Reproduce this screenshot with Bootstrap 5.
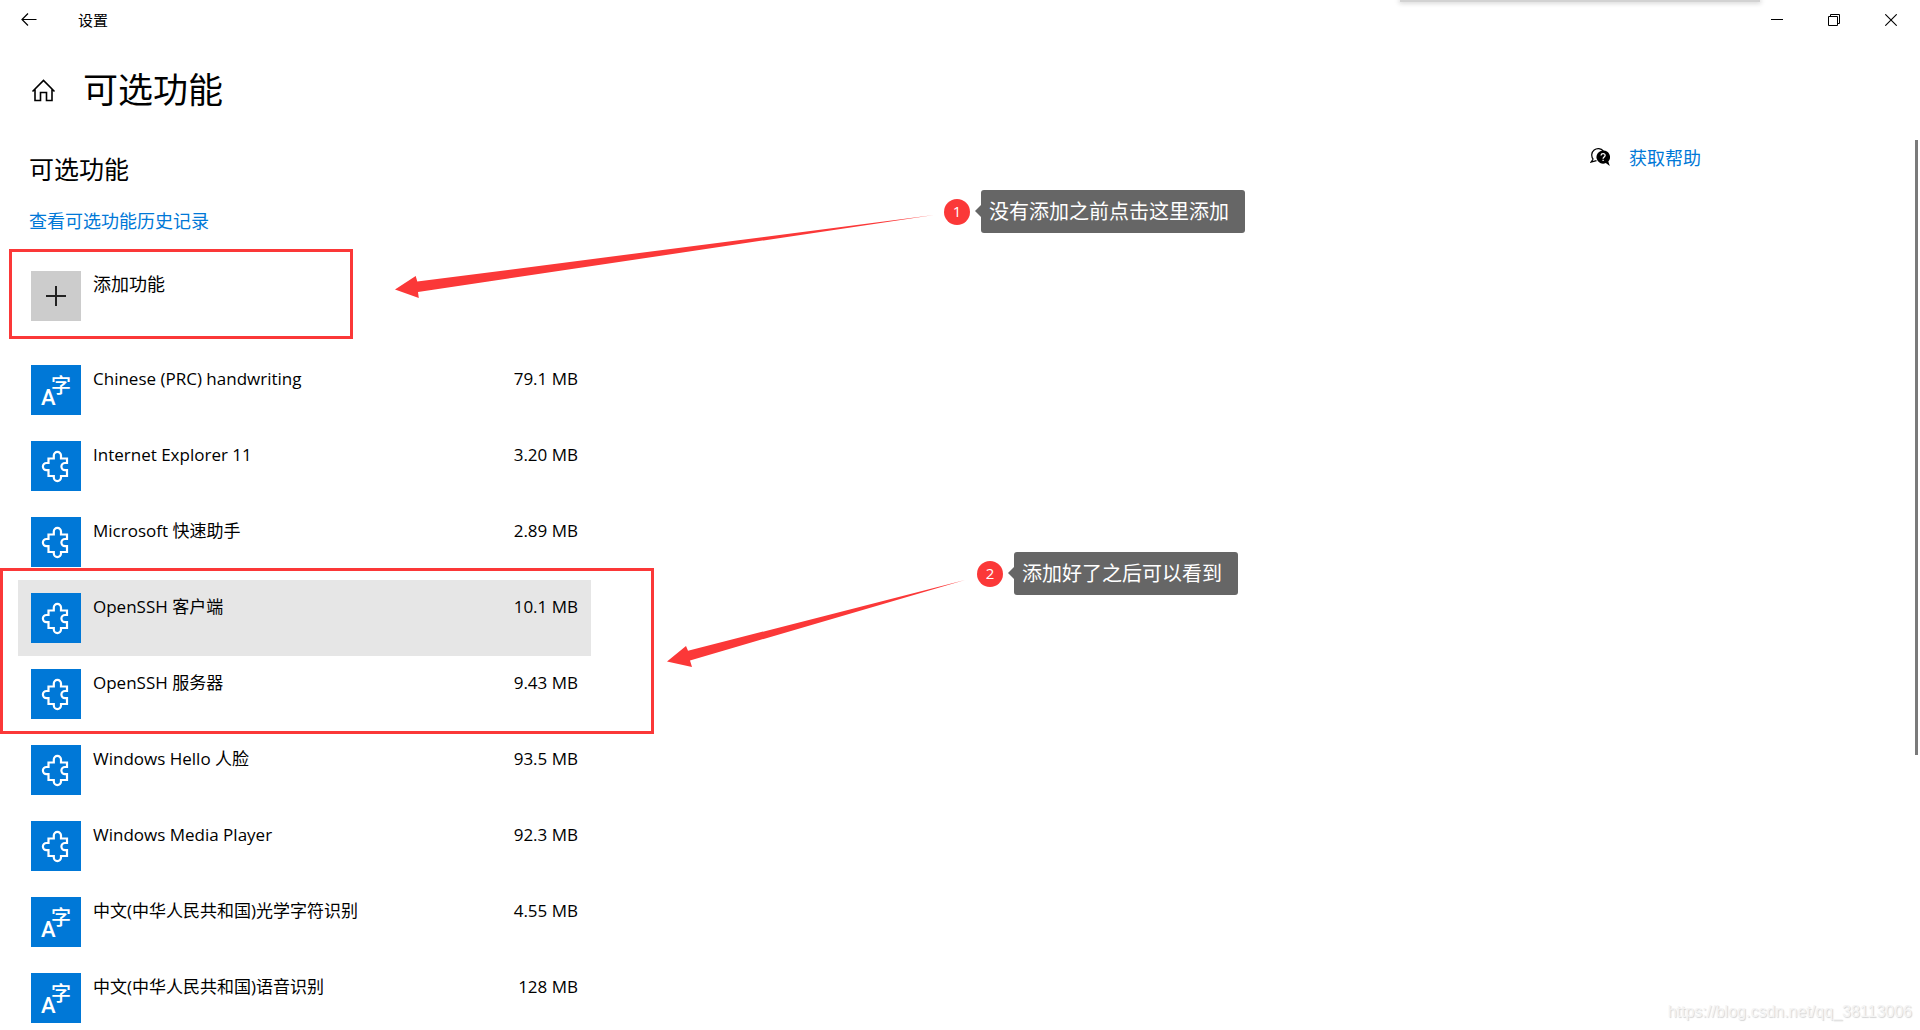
<!DOCTYPE html>
<html lang="zh-CN">
<head>
<meta charset="utf-8">
<meta name="viewport" content="width=device-width, initial-scale=1">
<title>设置</title>
<link href="https://cdn.jsdelivr.net/npm/bootstrap@5.3.0/dist/css/bootstrap.min.css" rel="stylesheet">
<style>
  :root { --accent: #0078d7; --note: #fb3838; }
  body { font-family: "Open Sans", "Noto Sans CJK SC", sans-serif; font-size: 17px; line-height: 28px; color: #000; background: #fff; }
  .window-bar { height: 40px; padding: 0 1px 0 21px; }
  .window-bar button, .home-btn { background: none; border: 0; padding: 0; color: #000; }
  .window-title { font-size: 15px; margin-left: 41px; }
  .caption-btn { width: 57px; height: 40px; }
  .page-head { height: 100px; padding-left: 31px; gap: 27px; }
  .page-head h1 { font-size: 35px; line-height: 48px; }
  .features { padding: 12px 0 0 18px; }
  .features h2 { font-size: 25px; line-height: 34px; margin: 0 0 23px 11px; }
  .history { font-size: 18px; line-height: 24px; margin: 0 0 25px 11px; }
  a.plain { color: var(--accent); text-decoration: none; }
  .feature { width: 573px; max-width: 100%; height: 76px; padding: 13px; gap: 12px; border: 0; background: none; color: #000; text-align: left; line-height: 27px; }
  .feature.hovered { background: #e6e6e6; }
  .tile { width: 50px; height: 50px; background: var(--accent); flex: none; }
  .tile-add { background: #ccc; }
  .add-row { font-size: 18px; margin-bottom: 18px; }
  .help { width: 330px; flex: none; padding-top: 6px; gap: 19px; font-size: 18px; line-height: 24px; }
  .scroll-thumb { right: 2px; top: 140px; width: 3px; height: 615px; background: #7a7a7a; }
  .edge-shadow { left: 1400px; top: 0; width: 360px; height: 2px; background: #d2d2d2; box-shadow: 0 0 5px 1px #ccc; }
  .frame { border: 3px solid var(--note); pointer-events: none; }
  .frame-add { left: 9px; top: 249px; width: 344px; height: 90px; }
  .frame-ssh { left: 0; top: 568px; width: 654px; height: 166px; }
  .arrows { left: 0; top: 0; pointer-events: none; }
  .callout { gap: 11px; height: 43px; }
  .callout-1 { left: 944px; top: 190px; }
  .callout-2 { left: 977px; top: 552px; }
  .num { width: 26px; height: 26px; border-radius: 50%; background: var(--note); color: #fff; font-size: 15px; line-height: 24px; text-align: center; }
  .bubble { position: relative; background: #666; color: #fff; border-radius: 3px; font-size: 20px; line-height: 43px; padding: 0 16px 0 8px; white-space: nowrap; }
  .bubble::before { content: ""; position: absolute; left: -6px; top: 15px; border: 6px solid transparent; border-left: 0; border-right-color: #666; }
  .watermark { right: 8px; bottom: 6px; font-family: "Liberation Sans", sans-serif; font-size: 16px; line-height: 24px; color: #f4f4f4; text-shadow: 1px 1px 1px #d4d4d4; }
</style>
<script src="https://cdn.jsdelivr.net/npm/bootstrap@5.3.0/dist/js/bootstrap.bundle.min.js"></script>
</head>
<body class="position-relative vh-100 overflow-hidden">

<svg class="d-none" aria-hidden="true">
  <symbol id="puzzle" viewBox="0 0 50 50">
    <path fill="none" stroke="#fff" stroke-width="2.200" d="M36 17.500H30V14.500a3.600 3.600 0 0 0-7.200 0V17.500H17.500V22H15.500a3.600 3.600 0 0 0 0 7.200H17.500V35H22.800V36.500a3.600 3.600 0 0 0 7.200 0V35H36V29.200H34a3.600 3.600 0 0 1 0-7.200H36Z"/>
  </symbol>
  <symbol id="lang" viewBox="0 0 50 50">
    <text x="10" y="40" fill="#fff" font-family="Roboto, sans-serif" font-size="22" font-weight="500">A</text>
    <text x="20" y="28" fill="#fff" font-family="Noto Sans CJK SC, sans-serif" font-size="20" font-weight="500">字</text>
  </symbol>
</svg>

<header class="window-bar d-flex align-items-center">
  <button type="button" class="d-flex" aria-label="返回">
    <svg width="16" height="14" viewBox="0 0 16 14" fill="none" stroke="#000" stroke-width="1.200"><path d="M15.500 6.500H1M7 .5l-6 6 6 6"/></svg>
  </button>
  <span class="window-title">设置</span>
  <div class="d-flex ms-auto">
    <button type="button" class="caption-btn" aria-label="最小化"><svg width="12" height="12" viewBox="0 0 12 12" class="d-block mx-auto"><path d="M0 5.500h12" stroke="#000"/></svg></button>
    <button type="button" class="caption-btn" aria-label="还原"><svg width="12" height="12" viewBox="0 0 12 12" fill="none" stroke="#000" class="d-block mx-auto"><path d="M.5 2.500h9v9h-9zM2.500 2.500v-2h9v9h-2"/></svg></button>
    <button type="button" class="caption-btn" aria-label="关闭"><svg width="12" height="12" viewBox="0 0 12 12" stroke="#000" stroke-width="1.100" class="d-block mx-auto"><path d="M.3.3l11.400 11.400M11.700.3L.3 11.700"/></svg></button>
  </div>
</header>

<div class="page-head d-flex align-items-center">
  <button type="button" class="home-btn d-flex" aria-label="主页">
    <svg width="25" height="24" viewBox="0 0 25 24" fill="none" stroke="#000" stroke-width="1.600"><path d="M1.500 13.500L12.500 2.500l11 11M4 11V22.500h5.500v-8h6v8H21V11"/></svg>
  </button>
  <h1 class="mb-0 fw-normal">可选功能</h1>
</div>

<div class="d-flex">
  <main class="features flex-grow-1 d-flex flex-column align-items-start">
    <h2 class="fw-normal">可选功能</h2>
    <a href="#" class="history plain">查看可选功能历史记录</a>
    <button type="button" class="feature add-row d-flex align-items-start">
      <span class="tile tile-add"><svg width="50" height="50" viewBox="0 0 50 50" class="d-block"><path d="M15 25h20M25 15v20" stroke="#222" stroke-width="2"/></svg></span>
      <span>添加功能</span>
    </button>
    <ul class="list-unstyled mb-0">
      <li class="feature d-flex"><svg class="tile"><use href="#lang"/></svg><span>Chinese (PRC) handwriting</span><span class="ms-auto">79.1 MB</span></li>
      <li class="feature d-flex"><svg class="tile"><use href="#puzzle"/></svg><span>Internet Explorer 11</span><span class="ms-auto">3.20 MB</span></li>
      <li class="feature d-flex"><svg class="tile"><use href="#puzzle"/></svg><span>Microsoft 快速助手</span><span class="ms-auto">2.89 MB</span></li>
      <li class="feature hovered d-flex"><svg class="tile"><use href="#puzzle"/></svg><span>OpenSSH 客户端</span><span class="ms-auto">10.1 MB</span></li>
      <li class="feature d-flex"><svg class="tile"><use href="#puzzle"/></svg><span>OpenSSH 服务器</span><span class="ms-auto">9.43 MB</span></li>
      <li class="feature d-flex"><svg class="tile"><use href="#puzzle"/></svg><span>Windows Hello 人脸</span><span class="ms-auto">93.5 MB</span></li>
      <li class="feature d-flex"><svg class="tile"><use href="#puzzle"/></svg><span>Windows Media Player</span><span class="ms-auto">92.3 MB</span></li>
      <li class="feature d-flex"><svg class="tile"><use href="#lang"/></svg><span>中文(中华人民共和国)光学字符识别</span><span class="ms-auto">4.55 MB</span></li>
      <li class="feature d-flex"><svg class="tile"><use href="#lang"/></svg><span>中文(中华人民共和国)语音识别</span><span class="ms-auto">128 MB</span></li>
    </ul>
  </main>
  <aside class="help d-flex align-items-start">
    <svg width="20" height="22" viewBox="0 0 20 22" aria-hidden="true">
      <path d="M3.200 13.200A6.500 6.500 0 1 1 13.300 5M3.200 13.200L1 16.200l5.500-1.500" fill="none" stroke="#000" stroke-width="1.200"/>
      <path d="M13 4.500a6.600 6.600 0 1 0 2.800 12.600L19.800 20l-1.500-4.500A6.600 6.600 0 0 0 13 4.500z"/>
      <path d="M11 9.500c.2-2.600 4.300-2.400 4.100 0-.1 1.400-2 1.500-2 3.200M13.100 13.700v1.400" fill="none" stroke="#fff" stroke-width="1.300"/>
    </svg>
    <a href="#" class="plain">获取帮助</a>
  </aside>
</div>

<div class="edge-shadow position-absolute"></div>
<div class="scroll-thumb position-absolute"></div>

<div class="frame frame-add position-absolute"></div>
<div class="frame frame-ssh position-absolute"></div>
<svg class="arrows position-absolute" width="980" height="700" viewBox="0 0 980 700" fill="#fb3838" aria-hidden="true">
  <path d="M395 289.500L415.700 276l1.600 5.600L934 215 418 292l.8 6z"/>
  <path d="M667 661.500L686 646l2 4.800L965 580 690 660.500l2 6.500z"/>
</svg>
<div class="callout callout-1 position-absolute d-flex align-items-center"><span class="num">1</span><span class="bubble">没有添加之前点击这里添加</span></div>
<div class="callout callout-2 position-absolute d-flex align-items-center"><span class="num">2</span><span class="bubble">添加好了之后可以看到</span></div>
<div class="watermark position-absolute">https://blog.csdn.net/qq_38113006</div>
</body>
</html>
